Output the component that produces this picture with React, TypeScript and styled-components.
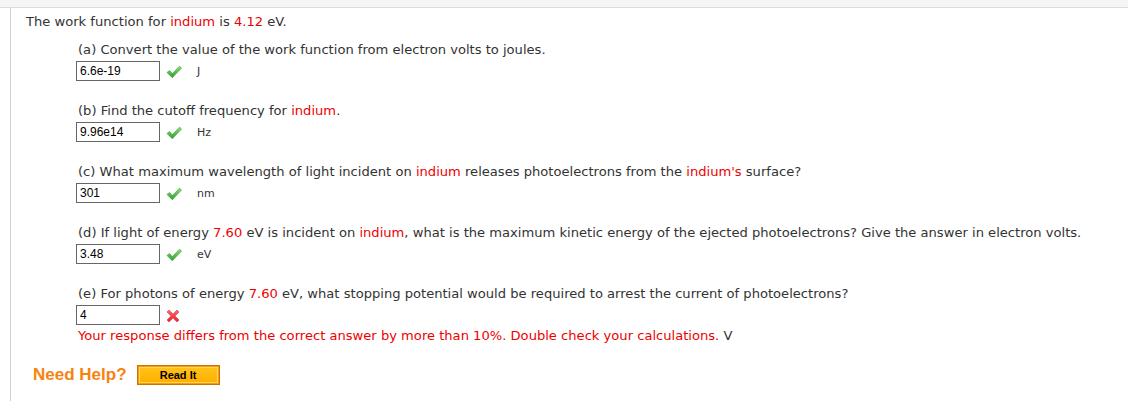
import React from "react";
import styled, { createGlobalStyle } from "styled-components";

const Global = createGlobalStyle`
  html, body { margin: 0; padding: 0; background: #fff; }
  body { font-family: Verdana, "DejaVu Sans", sans-serif; color: #333; }
`;

const TopBar = styled.div`
  height: 7px;
  background: #f5f5f5;
  border-bottom: 1px solid #dcdcdc;
`;

const Frame = styled.div`
  margin-left: 10px;
  border-left: 1px solid #cfcfcf;
  padding: 5px 0 0 15px;
  min-height: 393px;
  box-sizing: border-box;
`;

const Text = styled.div`
  font-size: 13.1px;
  line-height: 18px;
  white-space: nowrap;
`;

const Red = styled.span`
  color: #e00;
`;

const Question = styled.div<{ $last?: boolean }>`
  margin: 10px 0 ${(p) => (p.$last ? 20 : 21)}px 52px;
`;

const AnswerRow = styled.div`
  display: flex;
  align-items: center;
  margin-top: 2px;
  height: 20px;
`;

const Input = styled.div`
  box-sizing: border-box;
  width: 84px;
  height: 20px;
  margin-left: -2px;
  border: 1px solid #666;
  font-family: "Liberation Sans", Arial, sans-serif;
  font-size: 12px;
  line-height: 18px;
  padding-left: 3px;
  color: #000;
`;

const Mark = styled.span`
  display: inline-flex;
  width: 16px;
  margin-left: 6px;
  margin-top: 2px;
`;

const Unit = styled.span`
  font-size: 11px;
  margin-left: 15px;
  color: #333;
`;

const ErrorText = styled(Text)`
  color: #e00;
  margin-top: 2px;
`;

const Dark = styled.span`
  color: #333;
`;

const HelpRow = styled.div`
  display: flex;
  align-items: center;
  margin: 0 0 0 7px;
  gap: 10px;
`;

const NeedHelp = styled.span`
  font-family: "Liberation Sans", Arial, sans-serif;
  font-weight: bold;
  font-size: 17px;
  color: #f7830f;
`;

const ReadIt = styled.button`
  box-sizing: border-box;
  width: 83px;
  height: 20px;
  padding: 1px;
  border: 1px solid #c97400;
  background: #f59c00;
  cursor: pointer;
  display: flex;
`;

const ReadItInner = styled.span`
  flex: 1;
  border: 1px solid #ffd36a;
  background: linear-gradient(#ffc21a, #ffb000);
  font-family: "Liberation Sans", Arial, sans-serif;
  font-weight: bold;
  font-size: 11px;
  line-height: 14px;
  color: #000;
  text-align: center;
`;

const Check = () => (
  <svg width="16" height="14" viewBox="0 0 16 14">
    <defs>
      <linearGradient id="cg" x1="0" y1="0" x2="0" y2="1">
        <stop offset="0" stopColor="#8ee07a" />
        <stop offset="1" stopColor="#2e9e2a" />
      </linearGradient>
    </defs>
    <path d="M1 7.5 L3.5 5.5 L6.3 8.6 L13.5 1.2 L15.5 3 L6.3 12.8 Z" fill="url(#cg)" stroke="#3a9a33" strokeWidth="0.6" strokeLinejoin="round" />
  </svg>
);

const Cross = () => (
  <svg width="14" height="14" viewBox="0 0 14 14">
    <defs>
      <linearGradient id="xg" x1="0" y1="0" x2="0" y2="1">
        <stop offset="0" stopColor="#ff6b6b" />
        <stop offset="1" stopColor="#e8202a" />
      </linearGradient>
    </defs>
    <path d="M3 1 L7 5 L11 1 L13 3 L9 7 L13 11 L11 13 L7 9 L3 13 L1 11 L5 7 L1 3 Z" fill="url(#xg)" stroke="#e2353d" strokeWidth="0.6" strokeLinejoin="round" />
  </svg>
);

type Q = { q: React.ReactNode; value: string; unit?: string; ok: boolean; error?: React.ReactNode };

const questions: Q[] = [
  { q: <>(a) Convert the value of the work function from electron volts to joules.</>, value: "6.6e-19", unit: "J", ok: true },
  { q: <>(b) Find the cutoff frequency for <Red>indium</Red>.</>, value: "9.96e14", unit: "Hz", ok: true },
  {
    q: <>(c) What maximum wavelength of light incident on <Red>indium</Red> releases photoelectrons from the <Red>indium's</Red> surface?</>,
    value: "301",
    unit: "nm",
    ok: true,
  },
  {
    q: <>(d) If light of energy <Red>7.60</Red> eV is incident on <Red>indium</Red>, what is the maximum kinetic energy of the ejected photoelectrons? Give the answer in electron volts.</>,
    value: "3.48",
    unit: "eV",
    ok: true,
  },
  {
    q: <>(e) For photons of energy <Red>7.60</Red> eV, what stopping potential would be required to arrest the current of photoelectrons?</>,
    value: "4",
    ok: false,
    error: <>Your response differs from the correct answer by more than 10%. Double check your calculations. <Dark>V</Dark></>,
  },
];

export default function App() {
  return (
    <>
      <Global />
      <TopBar />
      <Frame>
        <Text>
          The work function for <Red>indium</Red> is <Red>4.12</Red> eV.
        </Text>
        {questions.map((item, i) => (
          <Question key={i} $last={!!item.error}>
            <Text>{item.q}</Text>
            <AnswerRow>
              <Input>{item.value}</Input>
              <Mark>{item.ok ? <Check /> : <Cross />}</Mark>
              {item.unit && <Unit>{item.unit}</Unit>}
            </AnswerRow>
            {item.error && <ErrorText>{item.error}</ErrorText>}
          </Question>
        ))}
        <HelpRow>
          <NeedHelp>Need Help?</NeedHelp>
          <ReadIt>
            <ReadItInner>Read It</ReadItInner>
          </ReadIt>
        </HelpRow>
      </Frame>
    </>
  );
}
